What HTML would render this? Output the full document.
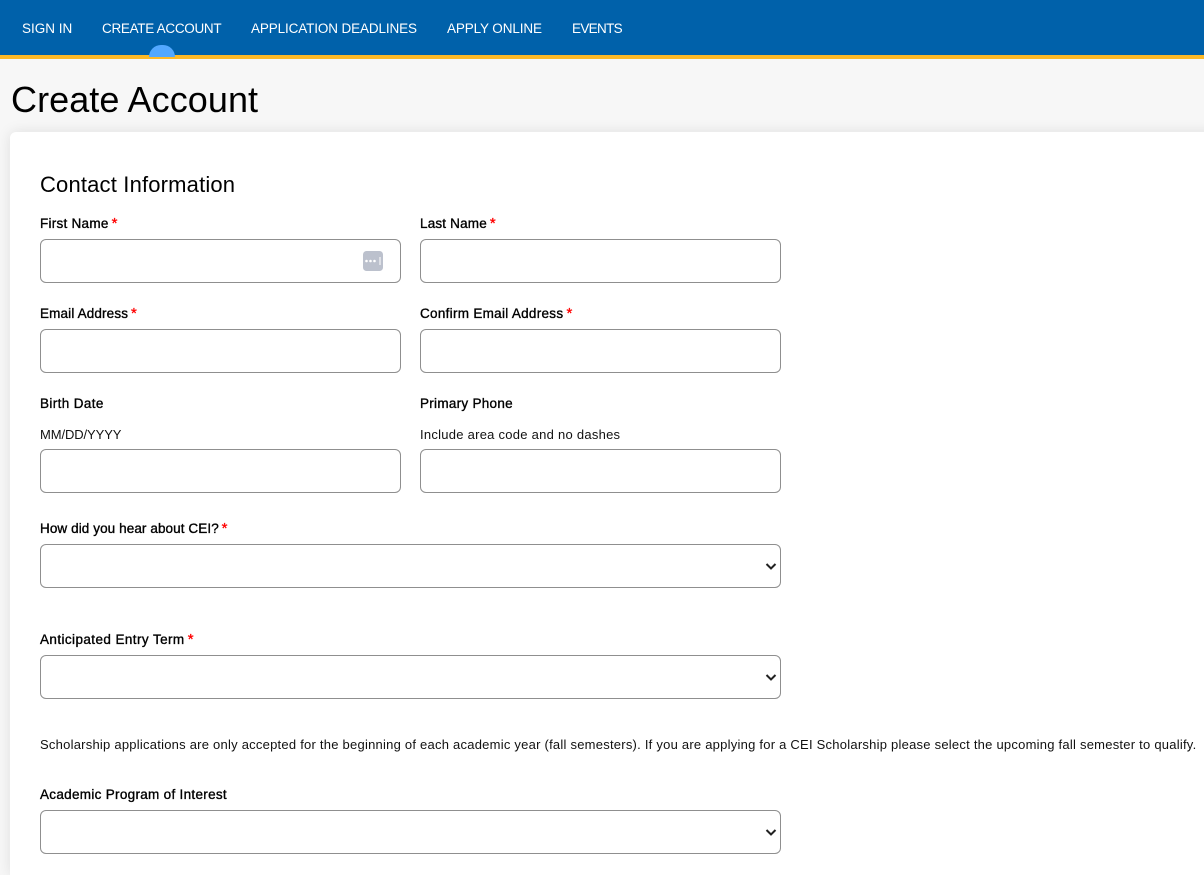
<!DOCTYPE html>
<html lang="en"><head><meta charset="utf-8"><title>Create Account</title>
<style>
html,body{margin:0;padding:0;width:1204px;height:875px;overflow:hidden;background:#f7f7f7;font-family:"Liberation Sans",sans-serif;color:#000}
#p{position:relative;width:1204px;height:875px;overflow:hidden}
.a{position:absolute;white-space:nowrap}
#nav{position:absolute;left:0;top:0;width:1204px;height:55px;background:#0061aa}
#bar{position:absolute;left:0;top:55px;width:1204px;height:4px;background:#fdb927}
#dot{position:absolute;left:149px;top:45px;width:26px;height:12px;background:#52a8ff;border-radius:13px 13px 0 0}
.n{top:20px;font-size:13.5px;line-height:18px;color:#fff}
h1{position:absolute;margin:0;left:11px;top:78px;font-size:36px;line-height:44px;font-weight:400;white-space:nowrap;letter-spacing:.07px}
#card{position:absolute;left:10px;top:132px;width:1210px;height:743px;background:#fff;border-radius:6px 6px 0 0;box-shadow:0 0 14px rgba(0,0,0,.1)}
h2{position:absolute;margin:0;left:40px;top:171px;font-size:22px;line-height:28px;font-weight:400;white-space:nowrap;letter-spacing:.17px}
.l{font-size:13.5px;line-height:18px;-webkit-text-stroke:.35px #000;color:#000}
.l b{color:#f00;font-weight:400;font-size:15px;-webkit-text-stroke:.3px #f00;margin-left:-1px}
.h{font-size:13px;line-height:18px;color:#111}
.f{position:absolute;box-sizing:border-box;height:44px;background:#fff;border:1px solid #8f8f8f;border-radius:6px}
.w1{left:40px;width:361px}.w2{left:420px;width:361px}.w3{left:40px;width:741px}
</style></head><body><div id="p">
<div id="nav"></div><div id="bar"></div><div id="dot"></div>
<div class="a n" style="left:22px">SIGN IN</div>
<div class="a n" style="left:102px;letter-spacing:-.3px">CREATE ACCOUNT</div>
<div class="a n" style="left:251px;letter-spacing:-.13px">APPLICATION DEADLINES</div>
<div class="a n" style="left:447px;letter-spacing:-.12px">APPLY ONLINE</div>
<div class="a n" style="left:572px;letter-spacing:-.67px">EVENTS</div>
<h1>Create Account</h1>
<div id="card"></div>
<h2>Contact Information</h2>

<div class="a l" style="left:40px;top:215px;letter-spacing:.26px">First Name <b>*</b></div>
<div class="a l" style="left:420px;top:215px;letter-spacing:.18px">Last Name <b>*</b></div>
<div class="f w1" style="top:239px"></div>
<div class="f w2" style="top:239px"></div>
<svg class="a" style="left:363px;top:251px" width="20" height="20" viewBox="0 0 20 20"><rect width="20" height="20" rx="3.5" fill="#bcc1cd"/><circle cx="3.500" cy="10" r="1.3" fill="#fff"/><circle cx="7.500" cy="10" r="1.3" fill="#fff"/><circle cx="11.500" cy="10" r="1.3" fill="#fff"/><rect x="16.500" y="6" width="1" height="8" fill="#fff"/></svg>

<div class="a l" style="left:40px;top:305px;letter-spacing:.14px">Email Address <b>*</b></div>
<div class="a l" style="left:420px;top:305px;letter-spacing:.29px">Confirm Email Address <b>*</b></div>
<div class="f w1" style="top:329px"></div>
<div class="f w2" style="top:329px"></div>

<div class="a l" style="left:40px;top:395px;letter-spacing:.38px">Birth Date</div>
<div class="a l" style="left:420px;top:395px;letter-spacing:.28px">Primary Phone</div>
<div class="a h" style="left:40px;top:426px;letter-spacing:-.1px">MM/DD/YYYY</div>
<div class="a h" style="left:420px;top:426px;letter-spacing:.26px">Include area code and no dashes</div>
<div class="f w1" style="top:449px"></div>
<div class="f w2" style="top:449px"></div>

<div class="a l" style="left:40px;top:520px;letter-spacing:.09px">How did you hear about CEI? <b>*</b></div>
<div class="f w3" style="top:544px"></div>
<svg class="a" style="left:765px;top:562px" width="12" height="9" viewBox="0 0 12 9"><path d="M1.5 2 L6 6.5 L10.500 2" fill="none" stroke="#222" stroke-width="2"/></svg>

<div class="a l" style="left:40px;top:631px;letter-spacing:.41px">Anticipated Entry Term <b>*</b></div>
<div class="f w3" style="top:655px"></div>
<svg class="a" style="left:765px;top:673px" width="12" height="9" viewBox="0 0 12 9"><path d="M1.5 2 L6 6.500 L10.500 2" fill="none" stroke="#222" stroke-width="2"/></svg>

<div class="a h" style="left:40px;top:736px;letter-spacing:.236px">Scholarship applications are only accepted for the beginning of each academic year (fall semesters). If you are applying for a CEI Scholarship please select the upcoming fall semester to qualify.</div>

<div class="a l" style="left:40px;top:786px;letter-spacing:.3px">Academic Program of Interest</div>
<div class="f w3" style="top:810px"></div>
<svg class="a" style="left:765px;top:828px" width="12" height="9" viewBox="0 0 12 9"><path d="M1.5 2 L6 6.500 L10.500 2" fill="none" stroke="#222" stroke-width="2"/></svg>
</div></body></html>
